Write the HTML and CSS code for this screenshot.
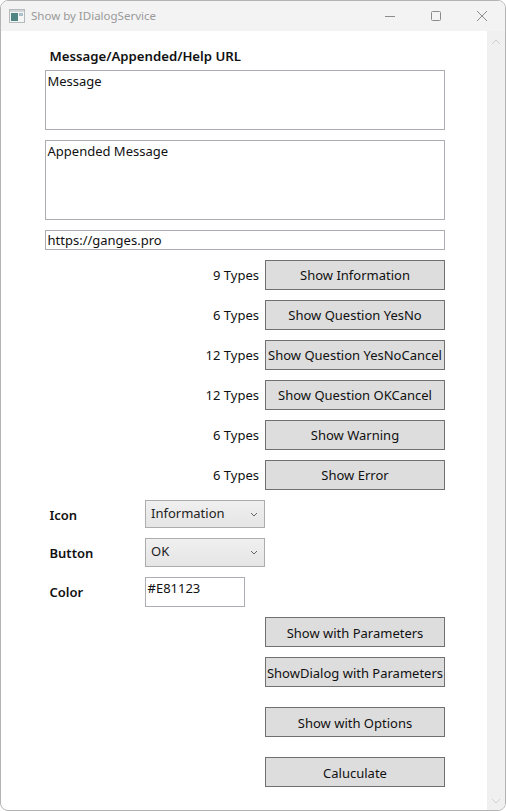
FILE: index.html
```html
<!DOCTYPE html>
<html lang="en">
<head>
  <meta charset="UTF-8" />
  <title>Show by IDialogService</title>
  <link rel="stylesheet" href="styles.css">
</head>
<body>
  <div class="window">
    <header class="titlebar">
      <svg class="app-icon" width="16" height="14" viewBox="0 0 16 14">
        <rect x="0.5" y="0.5" width="15" height="13" fill="#f4f6f6" stroke="#b4babc"/>
        <rect x="1" y="1" width="14" height="2" fill="#d2d6d8"/>
        <rect x="2" y="4" width="7" height="8" fill="#4f8683"/>
        <rect x="10" y="4" width="4" height="3" fill="#a9c0c8"/>
      </svg>
      <span class="title">Show by IDialogService</span>
      <div class="caption">
        <svg width="46" height="31" viewBox="0 0 46 31"><path d="M18 15.5h10" stroke="#8c8c8c" fill="none"/></svg>
        <svg width="46" height="31" viewBox="0 0 46 31"><rect x="18.5" y="10.5" width="9" height="9" rx="1" stroke="#8c8c8c" fill="none"/></svg>
        <svg width="46" height="31" viewBox="0 0 46 31"><path d="M18 10l10 10M28 10L18 20" stroke="#8c8c8c" fill="none"/></svg>
      </div>
    </header>

    <div class="client">
      <main class="content">
        <div class="heading">Message/Appended/Help URL</div>
        <div class="textbox message">Message</div>
        <div class="textbox appended">Appended Message</div>
        <div class="textbox url">https://ganges.pro</div>

        <div class="type-row"><span>9 Types</span><button class="btn">Show Information</button></div>
        <div class="type-row"><span>6 Types</span><button class="btn">Show Question YesNo</button></div>
        <div class="type-row"><span>12 Types</span><button class="btn">Show Question YesNoCancel</button></div>
        <div class="type-row"><span>12 Types</span><button class="btn">Show Question OKCancel</button></div>
        <div class="type-row"><span>6 Types</span><button class="btn">Show Warning</button></div>
        <div class="type-row"><span>6 Types</span><button class="btn">Show Error</button></div>

        <div class="field icon-field">
          <label>Icon</label>
          <div class="combo">Information
            <svg width="8" height="5" viewBox="0 0 8 5"><path d="M1 1l3 3 3-3" stroke="#666" fill="none"/></svg>
          </div>
        </div>
        <div class="field button-field">
          <label>Button</label>
          <div class="combo tall">OK
            <svg width="8" height="5" viewBox="0 0 8 5"><path d="M1 1l3 3 3-3" stroke="#666" fill="none"/></svg>
          </div>
        </div>
        <div class="field color-field">
          <label>Color</label>
          <div class="textbox color">#E81123</div>
        </div>

        <div class="actions">
          <button class="btn">Show with Parameters</button>
          <button class="btn">ShowDialog with Parameters</button>
          <button class="btn gap">Show with Options</button>
          <button class="btn gap">Caluculate</button>
        </div>
      </main>

      <aside class="scrollbar">
        <svg width="10" height="6" viewBox="0 0 10 6"><path d="M1 5l4-4 4 4" stroke="#cfcfcf" fill="none"/></svg>
        <svg width="10" height="6" viewBox="0 0 10 6"><path d="M1 1l4 4 4-4" stroke="#cfcfcf" fill="none"/></svg>
      </aside>
    </div>
  </div>
</body>
</html>
```

FILE: styles.css
```css
* {
  box-sizing: border-box;
}
html, body {
  margin: 0;
  height: 100%;
  background: #fff;
}
body {
  font-family: "Noto Sans", "Open Sans", sans-serif;
  font-size: 13px;
  color: #111;
}

.window {
  width: 506px;
  height: 811px;
  display: flex;
  flex-direction: column;
  border: 1px solid #b4b4b4;
  border-radius: 8px;
  overflow: hidden;
  background: #fff;
}

/* TITLE BAR */
.titlebar {
  height: 30px;
  flex: none;
  display: flex;
  align-items: center;
  padding-left: 8px;
  background: #f3f3f3;
}
.app-icon {
  margin-right: 6px;
}
.title {
  font-size: 11.5px;
  color: #9a9a9a;
  margin-bottom: 2px;
}
.caption {
  margin-left: auto;
  display: flex;
}

.client {
  flex: 1;
  display: flex;
  min-height: 0;
}

.content {
  width: 487px;
  padding-left: 44px;
}

.heading {
  height: 39px;
  padding: 15px 0 0 4.5px;
  font-size: 13.2px;
  font-weight: 600;
  line-height: 20px;
}

.textbox {
  width: 400px;
  border: 1px solid #abadb3;
  padding: 0 1.5px;
  line-height: 20px;
  background: #fff;
}
.message {
  height: 60px;
  margin-bottom: 10px;
}
.appended {
  height: 80px;
  margin-bottom: 10px;
}
.url {
  height: 20px;
  line-height: 18px;
  margin-bottom: 10px;
}

.type-row {
  display: flex;
  justify-content: flex-end;
  align-items: center;
  gap: 6px;
  width: 400px;
  margin-bottom: 10px;
}

.btn {
  width: 180px;
  height: 30px;
  padding: 1px 0 0;
  border: 1px solid #707070;
  background: #dddddd;
  font-family: inherit;
  font-size: 13px;
  color: #111;
  white-space: nowrap;
}
.type-row .btn {
  padding: 0;
}

.field {
  display: flex;
  align-items: flex-start;
}
.field label {
  width: 100px;
  padding: 5px 0 0 4.5px;
  font-weight: 600;
  line-height: 20px;
}
.icon-field {
  height: 38px;
}
.button-field {
  height: 39px;
}
.color-field {
  height: 40px;
}

.combo {
  width: 120px;
  height: 28px;
  display: flex;
  align-items: center;
  justify-content: space-between;
  padding: 0 6px 3px 5px;
  border: 1px solid #acacac;
  background: linear-gradient(#f0f0f0, #e5e5e5);
  color: #222;
}
.combo svg {
  margin-top: 3px;
}
.combo.tall {
  height: 29px;
}
.color {
  width: 100px;
  height: 30px;
}

.actions {
  display: flex;
  flex-direction: column;
  align-items: flex-end;
  gap: 10px;
  width: 400px;
}
.actions .gap {
  margin-top: 10px;
}

/* SCROLLBAR */
.scrollbar {
  width: 18px;
  flex: none;
  display: flex;
  flex-direction: column;
  justify-content: space-between;
  align-items: center;
  padding: 8px 0 6px;
  background: #f0f0f0;
}
```
